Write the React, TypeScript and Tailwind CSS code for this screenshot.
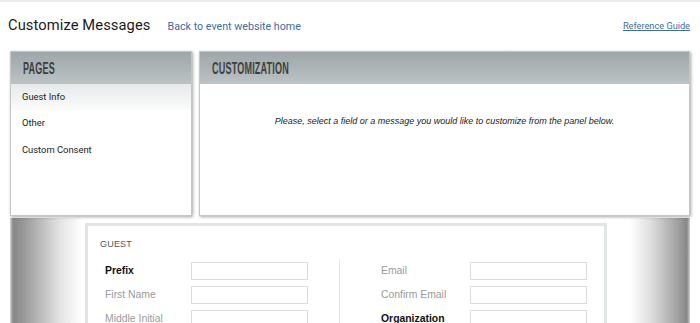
import React from "react";

const leftFields = [
  { label: "Prefix", bold: true },
  { label: "First Name", bold: false },
  { label: "Middle Initial", bold: false },
];

const rightFields = [
  { label: "Email", bold: false },
  { label: "Confirm Email", bold: false },
  { label: "Organization", bold: true },
];

function PanelHeader({ title }: { title: string }) {
  return (
    <div className="h-[32px] flex items-center pl-[12px] bg-gradient-to-b from-[#9ea6a9] to-[#bcc3c5] overflow-hidden">
      <span className="inline-block origin-left scale-x-[0.55] font-['Liberation_Sans',sans-serif] font-bold text-[16.5px] text-[#3f3f3f] tracking-[0.3px] whitespace-nowrap">
        {title}
      </span>
    </div>
  );
}

function FieldRow({ label, bold, labelW }: { label: string; bold: boolean; labelW: string }) {
  return (
    <div className="flex items-center h-[24px]">
      <div
        className={`${labelW} text-[10.4px] font-['Liberation_Sans',sans-serif] ${
          bold ? "font-bold text-[#111]" : "text-[#9a9a9a]"
        }`}
      >
        {label}
      </div>
      <div className="w-[117px] h-[18px] border border-[#dcdcdc] bg-white" />
    </div>
  );
}

export default function App() {
  return (
    <div className="w-[700px] h-[323px] overflow-hidden bg-white font-['Roboto',sans-serif]">
      {/* top strip */}
      <div className="h-[2px] bg-[#ececec]" />

      {/* header */}
      <div className="h-[47px] flex items-center justify-between pl-[8px] pr-[10px]">
        <div className="flex items-baseline gap-[17px]">
          <h1 className="text-[14.7px] text-[#1a1a1a] tracking-[0.1px]">Customize Messages</h1>
          <a className="text-[10.7px] text-[#3f6ba3]">Back to event website home</a>
        </div>
        <a className="text-[9.2px] text-[#3f6ba3] underline">Reference Guide</a>
      </div>

      {/* panels */}
      <div className="flex gap-[7px] px-[10px] mt-[2px]">
        <div className="w-[182px] h-[165px] bg-white border border-[#c6c6c6] shadow-[1px_1px_3px_rgba(0,0,0,0.35)]">
          <PanelHeader title="PAGES" />
          <div className="h-[26px] flex items-center pl-[11px] bg-gradient-to-b from-[#e6eaeb] to-[#fbfbfb] text-[9.4px] text-[#222]">
            Guest Info
          </div>
          <div className="h-[27px] flex items-center pl-[11px] text-[9.4px] text-[#222]">Other</div>
          <div className="h-[26px] flex items-center pl-[11px] text-[9.4px] text-[#222]">Custom Consent</div>
        </div>

        <div className="flex-1 h-[165px] bg-white border border-[#c6c6c6] shadow-[1px_1px_3px_rgba(0,0,0,0.35)]">
          <PanelHeader title="CUSTOMIZATION" />
          <p className="mt-[31px] text-center italic text-[9px] text-[#222] font-['Liberation_Sans',sans-serif]">
            Please, select a field or a message you would like to customize from the panel below.
          </p>
        </div>
      </div>

      {/* form preview */}
      <div className="mx-[10px] mt-[2px] h-[110px] pt-[5px] bg-[linear-gradient(to_right,#d8d8d8_0px,#888888_3px,#959595_12px,#e4e4e4_50px,#ffffff_72px,#ffffff_620px,#e0e0e0_640px,#a0a0a0_668px,#888888_677px,#d0d0d0_680px)]">
        <div className="ml-[75px] w-[522px] h-full bg-white border-[3px] border-b-0 border-[#e1e5e5] pl-[12px] pt-[12px]">
          <div className="text-[9px] text-[#555] font-['Liberation_Sans',sans-serif] tracking-[0.2px]">GUEST</div>
          <div className="flex mt-[7px]">
            <div className="w-[240px] pl-[5px] border-r border-[#e4e4e4]">
              {leftFields.map((f) => (
                <FieldRow key={f.label} label={f.label} bold={f.bold} labelW="w-[86px]" />
              ))}
            </div>
            <div className="pl-[41px]">
              {rightFields.map((f) => (
                <FieldRow key={f.label} label={f.label} bold={f.bold} labelW="w-[89px]" />
              ))}
            </div>
          </div>
        </div>
      </div>
    </div>
  );
}
